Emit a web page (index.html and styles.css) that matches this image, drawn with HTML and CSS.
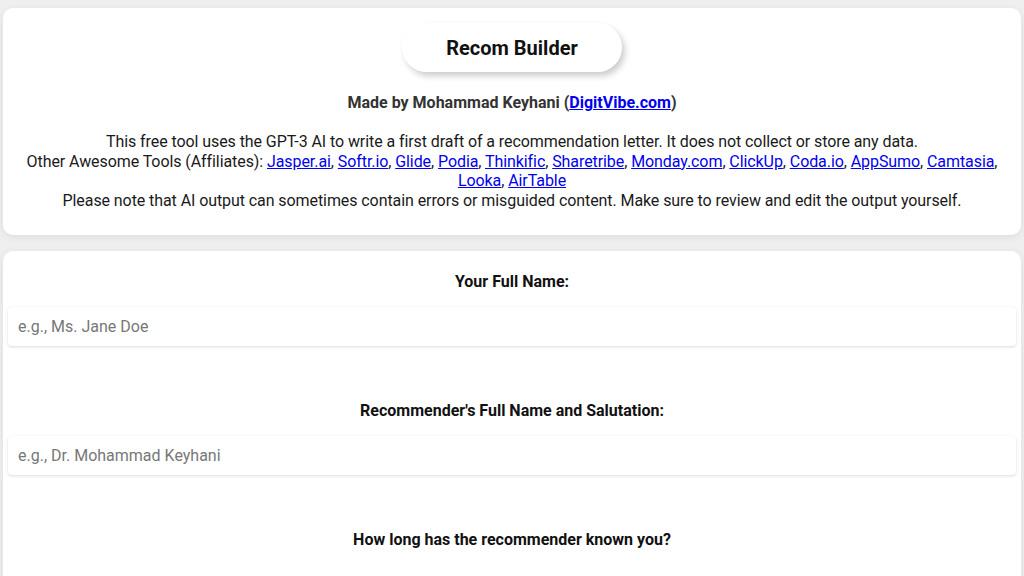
FILE: index.html
```html
<!DOCTYPE html>
<html>
<head>
<meta charset="utf-8">
<link rel="stylesheet" href="styles.css">
</head>
<body>
<div class="page">
  <section class="card header">
    <div class="title-pill">Recom Builder</div>
    <p class="made-by">Made by Mohammad Keyhani (<a href="#">DigitVibe.com</a>)</p>
    <p class="intro">This free tool uses the GPT-3 AI to write a first draft of a recommendation letter. It does not collect or store any data.<br>
    Other Awesome Tools (Affiliates): <a href="#">Jasper.ai</a>, <a href="#">Softr.io</a>, <a href="#">Glide</a>, <a href="#">Podia</a>, <a href="#">Thinkific</a>, <a href="#">Sharetribe</a>, <a href="#">Monday.com</a>, <a href="#">ClickUp</a>, <a href="#">Coda.io</a>, <a href="#">AppSumo</a>, <a href="#">Camtasia</a>, <a href="#">Looka</a>, <a href="#">AirTable</a><br>
    Please note that AI output can sometimes contain errors or misguided content. Make sure to review and edit the output yourself.</p>
  </section>
  <section class="card form">
    <div class="field">
      <label class="label">Your Full Name:</label>
      <input class="input" type="text" placeholder="e.g., Ms. Jane Doe">
    </div>
    <div class="field">
      <label class="label">Recommender's Full Name and Salutation:</label>
      <input class="input" type="text" placeholder="e.g., Dr. Mohammad Keyhani">
    </div>
    <div class="field">
      <label class="label label-wide">How long has the recommender known you?</label>
      <input class="input" type="text" placeholder="e.g., 3 years">
    </div>
  </section>
</div>
</body>
</html>
```
FILE: styles.css
```css
html, body {
  margin: 0;
  padding: 0;
  background: #efefef;
  font-family: Roboto, "Liberation Sans", sans-serif;
  color: #1a1a1a;
}
.page {
  padding: 8px 3px 0 3px;
  display: flex;
  flex-direction: column;
  gap: 16px;
}
.card {
  background: #fff;
  border-radius: 10px;
  box-shadow: 0 2px 8px rgba(0,0,0,0.08);
}
.header {
  display: flex;
  flex-direction: column;
  align-items: center;
  padding: 15px 16px 25px;
  text-align: center;
}
.title-pill {
  width: 220px;
  height: 49px;
  box-sizing: border-box;
  border-radius: 25px;
  display: flex;
  align-items: center;
  justify-content: center;
  font-size: 20px;
  font-weight: 700;
  color: #111;
  background: #fff;
  box-shadow: 3px 4px 6px rgba(0,0,0,0.2);
}
.made-by {
  margin: 21px 0 0;
  font-size: 16px;
  font-weight: 700;
  color: #333;
  line-height: 19px;
}
.made-by a { color: #0000ee; }
.intro {
  margin: 20px 0 0;
  font-size: 16px;
  line-height: 19.5px;
  letter-spacing: -0.08px;
  color: #1a1a1a;
}
.intro a { color: #0000ee; }
.form {
  padding: 0 5px;
  min-height: 400px;
}
.field {
  display: flex;
  flex-direction: column;
  align-items: stretch;
  padding-top: 21px;
  padding-bottom: 34px;
}
.label {
  text-align: center;
  font-size: 16px;
  font-weight: 700;
  color: #111;
  line-height: 19px;
  margin-bottom: 16px;
}
.label-wide {
  margin-bottom: 28px;
}
.input {
  height: 39px;
  box-sizing: border-box;
  border: none;
  outline: none;
  border-radius: 4px;
  background: #fff;
  box-shadow: 0 1px 3px rgba(0,0,0,0.15);
  padding: 0 10px;
  font-family: Roboto, "Liberation Sans", sans-serif;
  font-size: 16px;
  color: #222;
}
.input::placeholder { color: #777; }
```
